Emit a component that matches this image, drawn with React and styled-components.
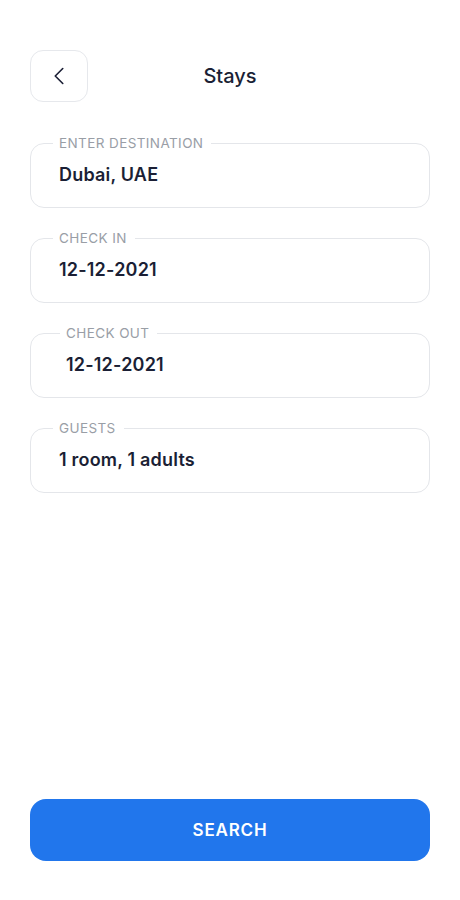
import React from "react";
import styled, { createGlobalStyle } from "styled-components";
import { ChevronLeft } from "lucide-react";

const fields = [
  { label: "Enter destination", value: "Dubai, UAE" },
  { label: "Check in", value: "12-12-2021" },
  { label: "Check out", value: "12-12-2021", indent: 7 },
  { label: "Guests", value: "1 room, 1 adults" }
];

const App = () => {
  return (
    <>
      <GlobalStyle />
      <Page>
        <Header>
          <BackButton aria-label="back">
            <ChevronLeft size={30} strokeWidth={1.3} />
          </BackButton>
          <Title>Stays</Title>
        </Header>
        <Form>
          {fields.map((f) => (
            <Field key={f.label} $indent={f.indent || 0}>
              <Legend>{f.label}</Legend>
              <Value>{f.value}</Value>
            </Field>
          ))}
        </Form>
        <SearchButton>SEARCH</SearchButton>
      </Page>
    </>
  );
};

const GlobalStyle = createGlobalStyle`
  * { box-sizing: border-box; }
  body {
    margin: 0;
    background: #fff;
    font-family: Inter, "Noto Sans", sans-serif;
    color: #1b1f35;
  }
`;

const Page = styled.div`
  min-height: 900px;
  display: flex;
  flex-direction: column;
  padding: 50px 30px 39px;
`;

const Header = styled.div`
  display: flex;
  align-items: center;
  height: 52px;
`;

const BackButton = styled.button`
  width: 58px;
  height: 52px;
  border: 1px solid #e6e8ec;
  border-radius: 13px;
  background: #fff;
  display: flex;
  align-items: center;
  justify-content: center;
  color: #1b1f35;
  padding: 0;
`;

const Title = styled.h1`
  flex: 1;
  margin: 0 58px 0 0;
  text-align: center;
  font-size: 20px;
  font-weight: 500;
  color: #1b1f35;
`;

const Form = styled.div`
  display: flex;
  flex-direction: column;
  gap: 22px;
  margin-top: 33px;
`;

const Field = styled.fieldset`
  margin: 0;
  border: 1px solid #e4e6ea;
  border-radius: 14px;
  padding: 0 28px 21px ${(p) => 28 + p.$indent}px;
  min-width: 0;
`;

const Legend = styled.legend`
  margin-left: -6px;
  padding: 0 8px 0 6px;
  font-size: 13.5px;
  line-height: 16px;
  text-transform: uppercase;
  color: #999ea6;
  letter-spacing: 0.4px;
`;

const Value = styled.div`
  margin-top: 13px;
  font-size: 18px;
  line-height: 22px;
  font-weight: 600;
  color: #1b1f35;
  letter-spacing: 0.2px;
`;

const SearchButton = styled.button`
  margin-top: auto;
  height: 62px;
  border: none;
  border-radius: 16px;
  background: #2176ec;
  color: #fff;
  font-family: Inter, "Noto Sans", sans-serif;
  font-size: 17px;
  font-weight: 600;
  letter-spacing: 0.8px;
`;

export default App;
